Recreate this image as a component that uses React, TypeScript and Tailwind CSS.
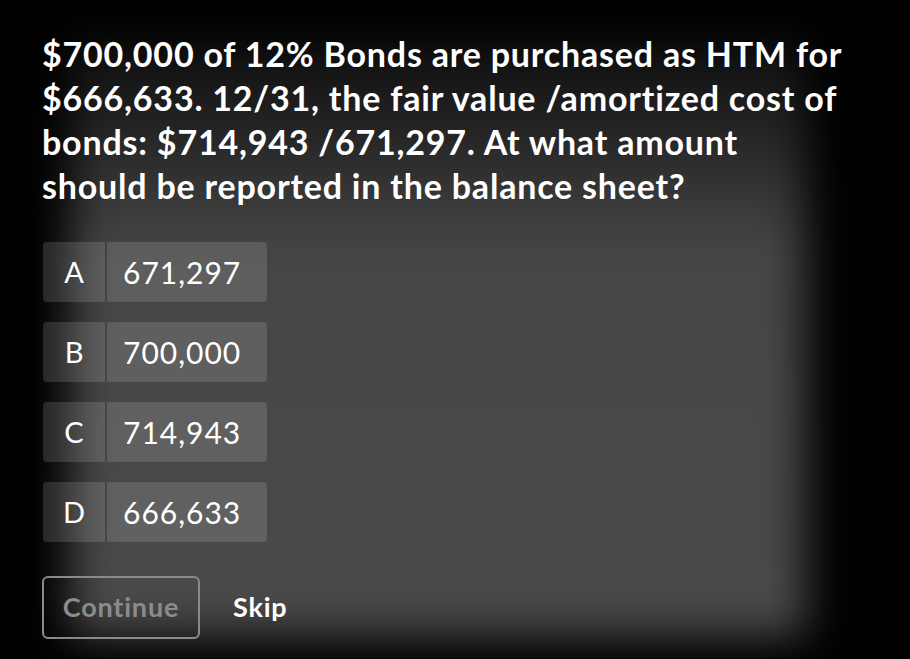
import React from 'react';

const options = [
  { key: 'A', value: '671,297' },
  { key: 'B', value: '700,000' },
  { key: 'C', value: '714,943' },
  { key: 'D', value: '666,633' },
];

export default function App() {
  return (
    <div
      className="relative w-[910px] h-[659px] overflow-hidden bg-black text-white"
      style={{ fontFamily: 'Lato, "Open Sans", sans-serif' }}
    >
      {/* blurred backdrop */}
      <div className="absolute left-[70px] right-[104px] top-[40px] bottom-[22px] blur-[22px] bg-gradient-to-b from-[#0e0e0e] via-[#464646] via-35% to-[#4a4a4a]" />

      <div className="relative pl-[42px] pt-[32px]">
        <h1 className="text-[34px] font-bold leading-[44px] tracking-[0.8px] whitespace-nowrap">
          $700,000 of 12% Bonds are purchased as HTM for
          <br />
          $666,633. 12/31, the fair value /amortized cost of
          <br />
          bonds: $714,943 /671,297. At what amount
          <br />
          should be reported in the balance sheet?
        </h1>

        <div className="mt-[34px] flex flex-col gap-[20px] pl-px">
          {options.map((o) => (
            <button key={o.key} className="flex w-[224px] h-[60px] gap-[2px] text-left">
              <span className="w-[62px] h-full flex items-center justify-center rounded-l bg-white/[0.13] text-[29px]">
                {o.key}
              </span>
              <span className="flex-1 h-full flex items-center pl-[16px] rounded-r bg-white/[0.13] text-[30px] tracking-[1px]">
                {o.value}
              </span>
            </button>
          ))}
        </div>

        <div className="mt-[34px] flex items-center gap-[33px]">
          <button className="w-[158px] h-[63px] rounded-md border-2 border-[#8a8a8a] text-[#8b8b8b] text-[27px] font-bold tracking-[0.8px]">
            Continue
          </button>
          <button className="text-[27px] font-bold text-white tracking-[0.8px]">Skip</button>
        </div>
      </div>
    </div>
  );
}
